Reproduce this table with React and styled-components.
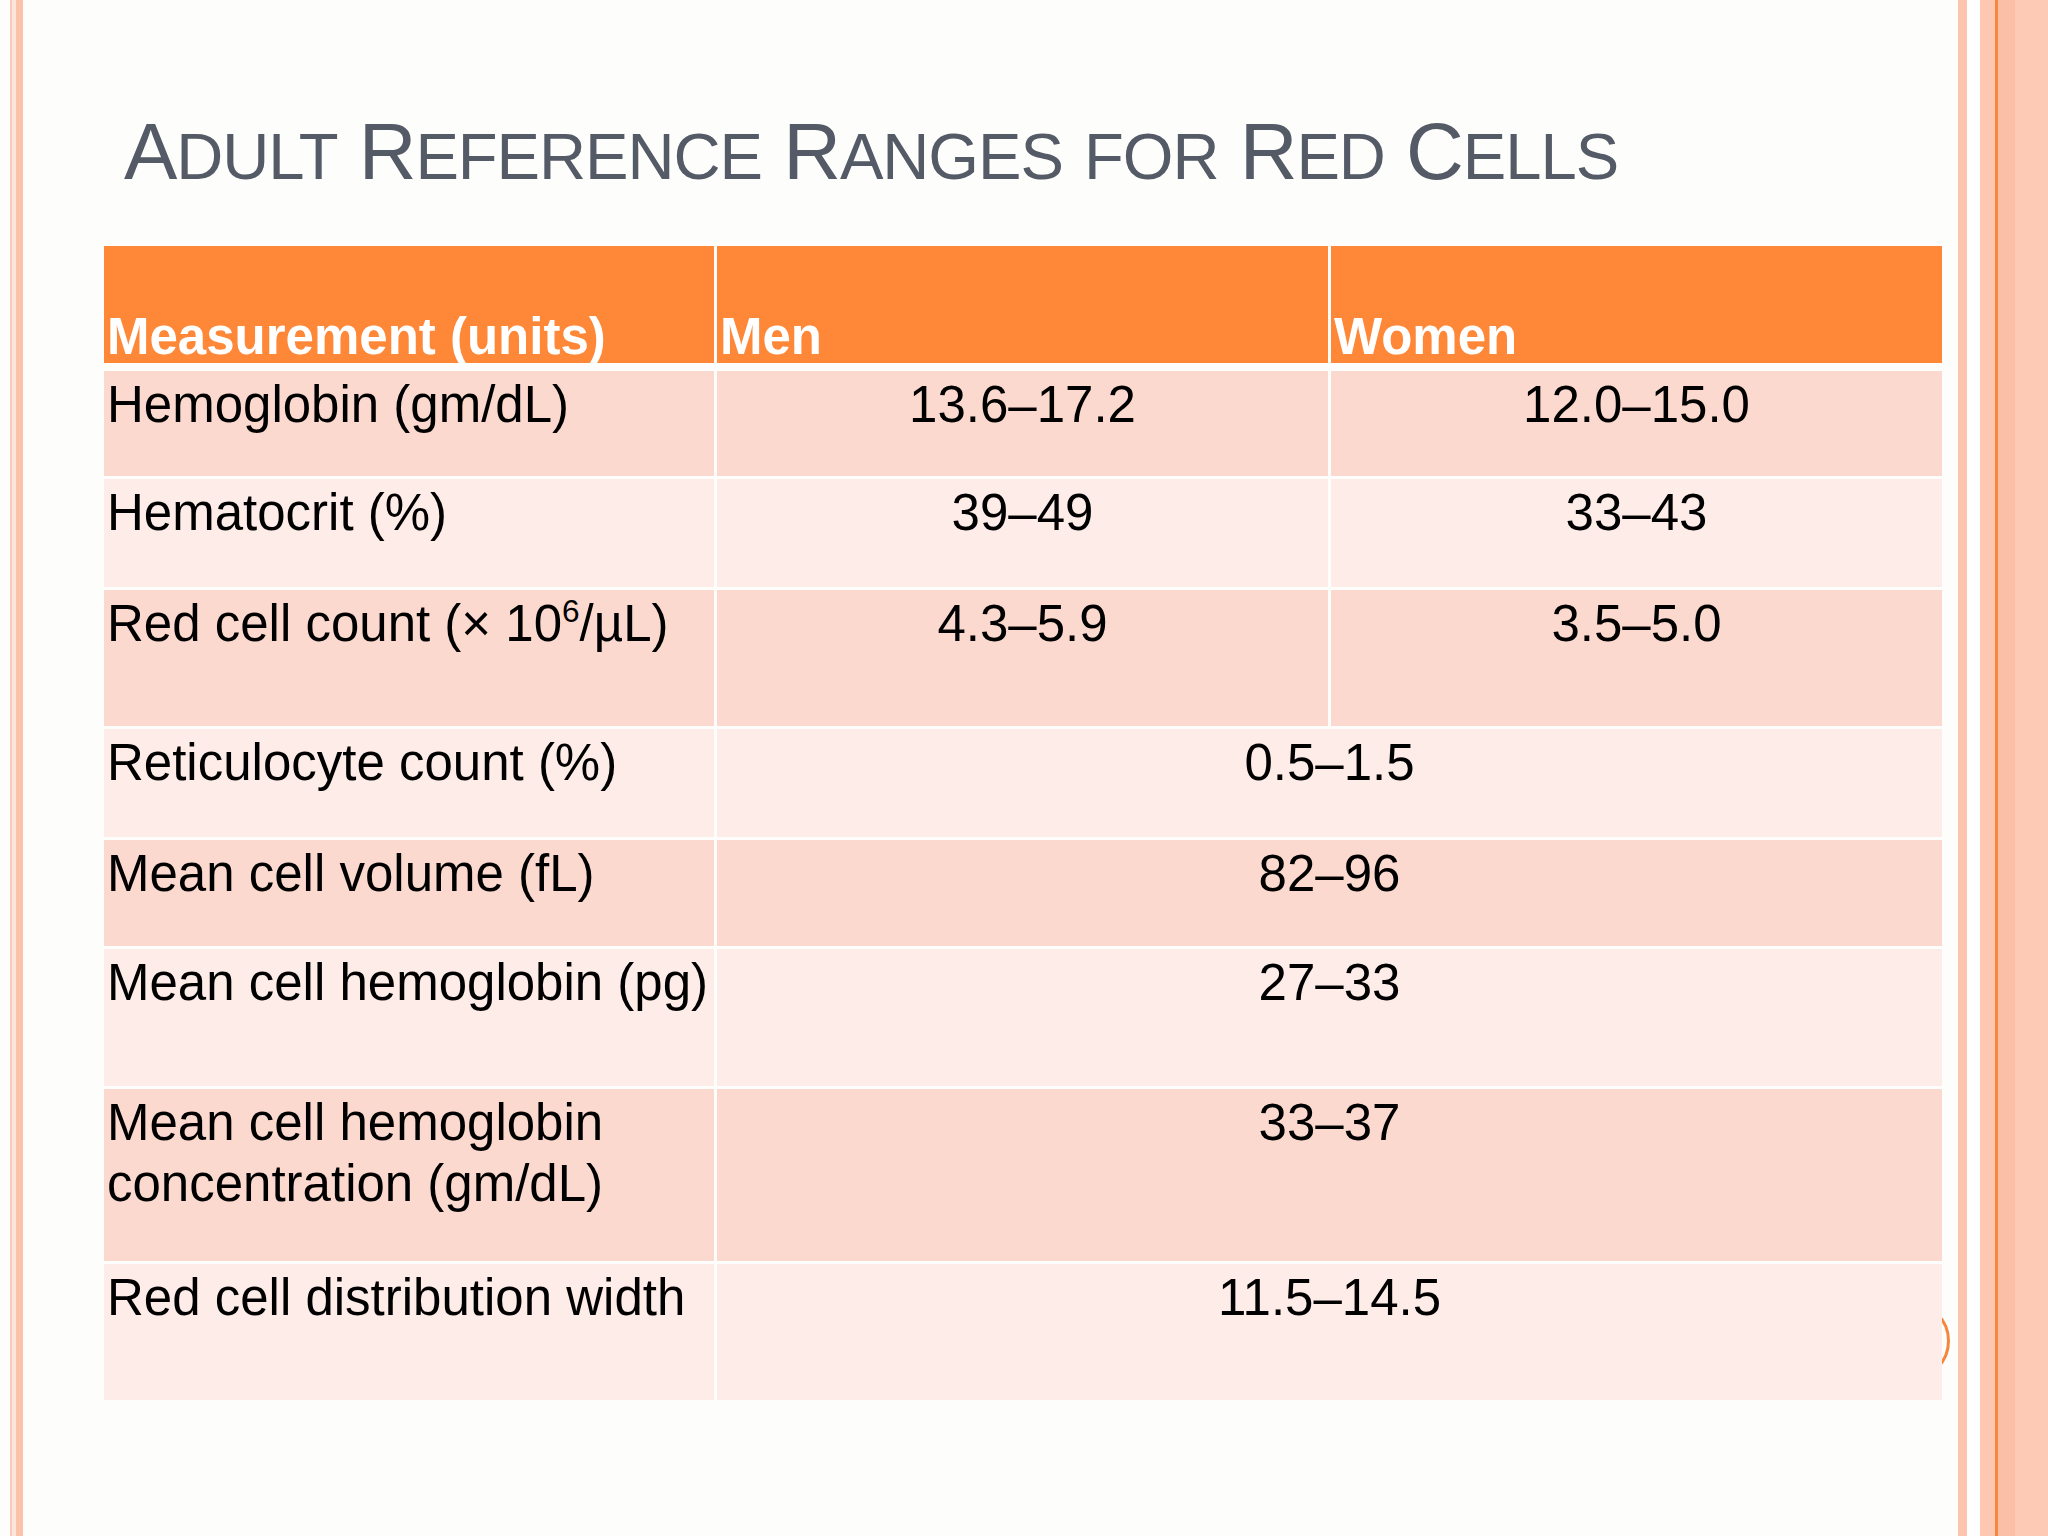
import React from 'react';
import styled, { createGlobalStyle } from 'styled-components';

const Global = createGlobalStyle`
  html, body { margin: 0; padding: 0; background: #fdfdfb; }
  body { font-family: "Liberation Sans", Arial, sans-serif; }
`;

const Slide = styled.div`
  position: relative;
  width: 2048px;
  height: 1536px;
  overflow: hidden;
  box-sizing: border-box;
  padding: 112px 0 0 104px;
  display: flex;
  flex-direction: column;
  background: linear-gradient(
    to right,
    #fdfdfb 0 10px,
    #f6cbbd 10px 12px,
    #fbe6de 12px 16px,
    #fcc3ab 16px 23px,
    #fdfdfb 23px 1958px,
    #fcc5b0 1958px 1967px,
    #fefefe 1967px 1980px,
    #fdc7b2 1980px 1995px,
    #f5873e 1995px 1998px,
    #fbbfa6 1998px 2015px,
    #fdcab5 2015px 2048px
  );
`;

const Title = styled.h1`
  margin: 0 0 0 20px;
  font-family: "Liberation Sans", Arial, sans-serif;
  font-weight: 400;
  font-size: 80px;
  line-height: 80px;
  color: #545a66;
  white-space: nowrap;
  letter-spacing: -1.05px;
`;

const Low = styled.span`
  font-size: 0.815em;
  text-transform: uppercase;
`;

const Table = styled.div`
  position: relative;
  z-index: 1;
  margin-top: 49px;
  width: 1838px;
  display: flex;
  flex-direction: column;
  gap: 3px;
`;

const Row = styled.div`
  display: grid;
  grid-template-columns: 610px 611px 611px;
  column-gap: 3px;
  height: ${p => p.$h}px;
  margin-bottom: ${p => (p.$head ? 5 : 0)}px;
`;

const HeadCell = styled.div`
  background: #fe8738;
  color: #ffffff;
  font-weight: 700;
  font-size: 51px;
  line-height: 51px;
  padding: 0 0 1px 3px;
  display: flex;
  align-items: flex-end;
  white-space: nowrap;
`;

const Cell = styled.div`
  background: ${p => (p.$alt ? '#fdece7' : '#fcd9ce')};
  color: #000;
  font-size: 51px;
  line-height: 61px;
  padding: 3px 0 0 ${p => (p.$center ? 0 : 3)}px;
  text-align: ${p => (p.$center ? 'center' : 'left')};
  grid-column: ${p => (p.$span ? 'span 2' : 'auto')};
`;

const Sup = styled.sup`
  font-size: 0.62em;
  line-height: 0;
  vertical-align: 0.6em;
`;

const Ring = styled.div`
  position: absolute;
  z-index: 0;
  left: 1870px;
  top: 1301px;
  width: 80px;
  height: 80px;
  box-sizing: border-box;
  border: 3.5px solid #f5863d;
  border-radius: 50%;
`;

const rows = [
  { label: 'Hemoglobin (gm/dL)', men: '13.6–17.2', women: '12.0–15.0', h: 105 },
  { label: 'Hematocrit (%)', men: '39–49', women: '33–43', h: 108 },
  {
    label: (
      <>
        Red cell count (× 10<Sup>6</Sup>/µL)
      </>
    ),
    men: '4.3–5.9',
    women: '3.5–5.0',
    h: 136,
  },
  { label: 'Reticulocyte count (%)', both: '0.5–1.5', h: 108 },
  { label: 'Mean cell volume (fL)', both: '82–96', h: 106 },
  { label: 'Mean cell hemoglobin (pg)', both: '27–33', h: 137 },
  { label: 'Mean cell hemoglobin concentration (gm/dL)', both: '33–37', h: 172 },
  { label: 'Red cell distribution width', both: '11.5–14.5', h: 136 },
];

export default function App() {
  return (
    <>
      <Global />
      <Slide>
        <Title>
          A<Low>dult</Low> R<Low>eference</Low> R<Low>anges</Low> <Low>for</Low> R<Low>ed</Low> C<Low>ells</Low>
        </Title>
        <Table>
          <Row $h={117} $head>
            <HeadCell>Measurement (units)</HeadCell>
            <HeadCell>Men</HeadCell>
            <HeadCell>Women</HeadCell>
          </Row>
          {rows.map((r, i) => {
            const alt = i % 2 === 1;
            return (
              <Row key={i} $h={r.h}>
                <Cell $alt={alt}>{r.label}</Cell>
                {r.both ? (
                  <Cell $alt={alt} $center $span>
                    {r.both}
                  </Cell>
                ) : (
                  <>
                    <Cell $alt={alt} $center>
                      {r.men}
                    </Cell>
                    <Cell $alt={alt} $center>
                      {r.women}
                    </Cell>
                  </>
                )}
              </Row>
            );
          })}
        </Table>
        <Ring />
      </Slide>
    </>
  );
}
